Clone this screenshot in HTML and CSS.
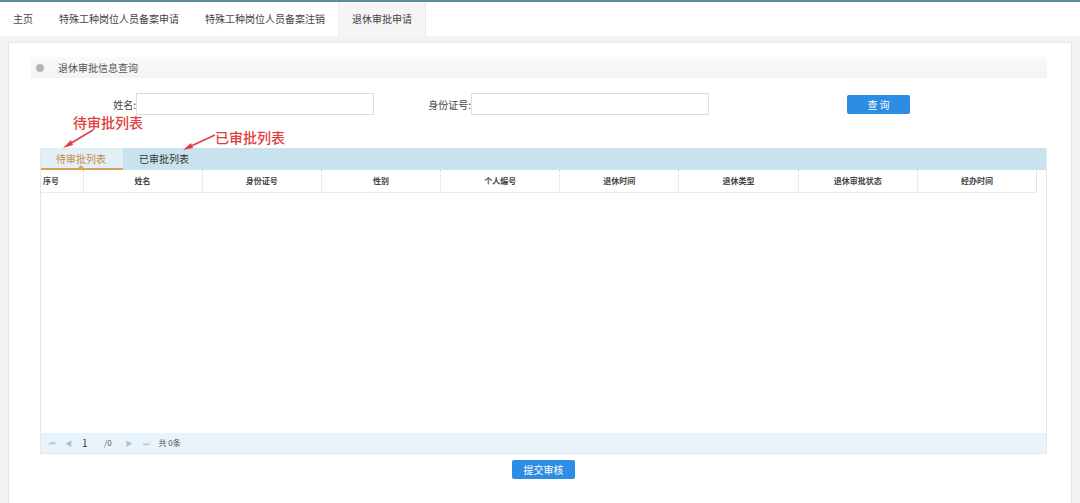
FILE: index.html
```html
<!DOCTYPE html>
<html lang="zh-CN">
<head>
  <meta charset="UTF-8">
  <title>退休审批申请</title>
  <link rel="stylesheet" href="styles.css">
</head>
<body>

<div class="topbar">
  <a class="nav-tab">主页</a>
  <a class="nav-tab">特殊工种岗位人员备案申请</a>
  <a class="nav-tab">特殊工种岗位人员备案注销</a>
  <a class="nav-tab active">退休审批申请</a>
</div>

<div class="page">
  <div class="panel">
    <div class="section-title">
      <span class="dot"></span>
      <span>退休审批信息查询</span>
    </div>

    <!-- 查询条件 -->
    <div class="search-row">
      <label class="lbl lbl-name">姓名:</label>
      <input class="txt" type="text">
      <label class="lbl lbl-id">身份证号:</label>
      <input class="txt" type="text">
      <button class="btn btn-search">查 询</button>
    </div>

    <div class="note-row">
      <span class="note note-a">待审批列表</span>
      <svg class="arrows" width="260" height="36" viewBox="0 0 260 36">
        <line x1="50" y1="14" x2="25" y2="29" stroke="#e14040" stroke-width="1.6"/>
        <polygon points="20,32 28,24 30,29" fill="#e14040"/>
        <line x1="172" y1="19" x2="146" y2="31" stroke="#e14040" stroke-width="1.6"/>
        <polygon points="140,34 148,27 150,32" fill="#e14040"/>
      </svg>
      <span class="note note-b">已审批列表</span>
    </div>

    <div class="grid-box">
      <div class="list-tabs">
        <div class="list-tab active">待审批列表</div>
        <div class="list-tab">已审批列表</div>
      </div>
      <table class="grid">
        <thead>
          <tr>
            <th class="c-no">序号</th>
            <th>姓名</th>
            <th>身份证号</th>
            <th>性别</th>
            <th>个人编号</th>
            <th>退休时间</th>
            <th>退休类型</th>
            <th>退休审批状态</th>
            <th>经办时间</th>
          </tr>
        </thead>
      </table>
      <div class="grid-body"></div>
      <div class="pager">
        <span class="pg-ico">&#x23EE;</span>
        <span class="pg-ico">&#x25C0;</span>
        <span class="pg-num">1</span>
        <span class="pg-total">/0</span>
        <span class="pg-ico">&#x25B6;</span>
        <span class="pg-ico">&#x23ED;</span>
        <span class="pg-count">共 0条</span>
      </div>
    </div>

    <div class="submit-row">
      <button class="btn btn-submit">提交审核</button>
    </div>
  </div>
</div>

</body>
</html>
```

FILE: styles.css
```css
* {
  box-sizing: border-box;
}
body {
  margin: 0;
  font-family: "Noto Sans CJK SC", "Noto Sans", sans-serif;
  font-size: 11px;
  color: #333;
  background: #f3f3f3;
  height: 503px;
  overflow: hidden;
}
.topbar {
  height: 36px;
  background: #fff;
  border-top: 2px solid #5f8c99;
  display: flex;
  align-items: stretch;
}
.nav-tab {
  padding: 0 13px;
  line-height: 33px;
  font-size: 10px;
  color: #444;
}
.nav-tab.active {
  background: #f5f5f5;
  padding: 0 13px;
  border-right: 1px solid #e8e8e8;
  border-left: 1px solid #ececec;
}
.page {
  padding: 6px 8px 0 8px;
}
.panel {
  background: #fff;
  border: 1px solid #e6e6e6;
  height: 470px;
  padding: 14px 24px 0 22px;
}
.section-title {
  display: flex;
  align-items: center;
  height: 21px;
  background: linear-gradient(#fafafa, #f3f3f3);
  font-size: 10px;
  color: #555;
}
.dot {
  width: 8px;
  height: 8px;
  border-radius: 50%;
  background: #b5b5b5;
  margin: 0 14px 0 5px;
}
.search-row {
  display: flex;
  align-items: center;
  height: 24px;
  margin-top: 14px;
}
.lbl {
  font-size: 10px;
  color: #444;
  text-align: right;
}
.lbl-name {
  width: 105px;
}
.lbl-id {
  width: 97px;
}
.txt {
  width: 238px;
  height: 22px;
  border: 1px solid #ddd;
  margin: 0;
  padding: 0 3px;
}
.btn {
  border: none;
  border-radius: 2px;
  background: #2d8ce3;
  color: #fff;
  font-family: inherit;
  font-size: 10px;
  cursor: pointer;
}
.btn-search {
  width: 63px;
  height: 19px;
  margin-left: 138px;
}
.note-row {
  position: relative;
  height: 32px;
}
.note {
  position: absolute;
  color: #e14040;
  font-size: 14px;
  font-weight: 500;
}
.note-a {
  left: 42px;
  top: -4px;
}
.note-b {
  left: 184px;
  top: 11px;
}
.arrows {
  position: absolute;
  left: 12px;
  top: 0;
}
.grid-box {
  border: 1px solid #e2e8ec;
  border-top: none;
  margin-left: 9px;
}
.list-tabs {
  display: flex;
  height: 22px;
  background: #c9e3ee;
}
.list-tab {
  padding: 0 0 0 16px;
  width: 82px;
  line-height: 21px;
  font-size: 10px;
  color: #333;
}
.list-tab.active {
  position: relative;
  background: #e2f0f6;
  color: #c78a45;
  padding-left: 15px;
  border-bottom: 2px solid #d7a259;
}
.list-tab.active::after {
  content: "";
  position: absolute;
  left: 37px;
  bottom: 0;
  border: 3px solid transparent;
  border-bottom-color: #d7a259;
}
.grid {
  width: 996px;
  border-collapse: collapse;
  table-layout: fixed;
}
.grid th {
  height: 22px;
  font-size: 8px;
  font-weight: bold;
  color: #444;
  border-right: 1px dotted #d6d6d6;
  border-bottom: 1px solid #ececec;
  text-align: center;
}
.grid th:last-child {
  border-right: 1px solid #e4e4e4;
}
.grid th.c-no {
  width: 42px;
  text-align: left;
  padding-left: 2px;
}
.grid-body {
  height: 240px;
}
.pager {
  height: 20px;
  background: #e8f3fb;
  display: flex;
  align-items: center;
  padding-left: 8px;
  font-size: 8px;
  color: #555;
}
.pg-ico {
  color: #a9c3da;
  font-size: 7px;
  margin-right: 10px;
}
.pg-num {
  width: 22px;
  font-size: 10px;
  color: #333;
}
.pg-total {
  margin-right: 14px;
}
.submit-row {
  display: flex;
  justify-content: center;
  padding-top: 6px;
}
.btn-submit {
  width: 63px;
  height: 19px;
  margin-left: 9px;
}
```
